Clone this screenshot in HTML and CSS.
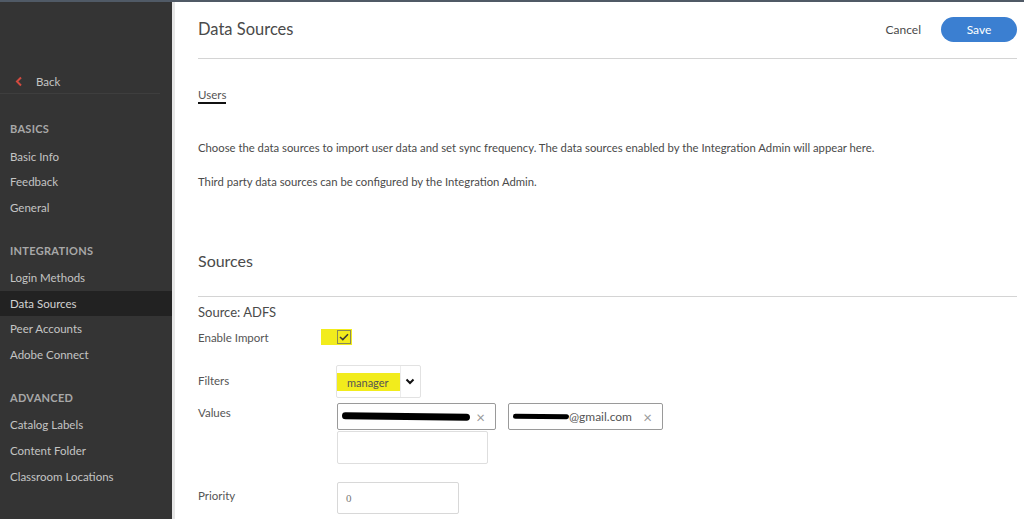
FILE: index.html
```html
<!DOCTYPE html>
<html lang="en">
<head>
    <meta charset="UTF-8">
    <meta name="viewport" content="width=device-width, initial-scale=1.0">
    <title>Data Sources</title>
    <link rel="stylesheet" href="styles.css">
</head>
<body>
    <div class="app">
        <aside class="sidebar">
            <div class="back">
                <svg class="back-icon" width="8" height="11" viewBox="0 0 8 11">
                    <path d="M6 1.5 L2 5.5 L6 9.5" fill="none" stroke="#d24a3f" stroke-width="2"/>
                </svg>
                <span>Back</span>
            </div>
            <div class="nav-group">
                <div class="nav-title">BASICS</div>
                <div class="nav-item">Basic Info</div>
                <div class="nav-item">Feedback</div>
                <div class="nav-item">General</div>
            </div>
            <div class="nav-group">
                <div class="nav-title">INTEGRATIONS</div>
                <div class="nav-item">Login Methods</div>
                <div class="nav-item active">Data Sources</div>
                <div class="nav-item">Peer Accounts</div>
                <div class="nav-item">Adobe Connect</div>
            </div>
            <div class="nav-group">
                <div class="nav-title">ADVANCED</div>
                <div class="nav-item">Catalog Labels</div>
                <div class="nav-item">Content Folder</div>
                <div class="nav-item">Classroom Locations</div>
            </div>
        </aside>

        <main class="main">
            <header class="page-header">
                <h1>Data Sources</h1>
                <div class="actions">
                    <button class="btn-cancel">Cancel</button>
                    <button class="btn-save">Save</button>
                </div>
            </header>

            <div class="tabs">
                <span class="tab active">Users</span>
            </div>

            <p class="intro">Choose the data sources to import user data and set sync frequency. The data sources enabled by the Integration Admin will appear here.</p>
            <p class="intro second">Third party data sources can be configured by the Integration Admin.</p>

            <h2 class="section-title">Sources</h2>

            <div class="source">
                <h3>Source: ADFS</h3>
                <div class="row row-import">
                    <label>Enable Import</label>
                    <div class="field">
                        <span class="highlight check-hl">
                            <span class="checkbox">
                                <svg width="10" height="8" viewBox="0 0 10 8">
                                    <path d="M1 4 L3.8 6.6 L9 1.2" fill="none" stroke="#3a3a3a" stroke-width="1.5"/>
                                </svg>
                            </span>
                        </span>
                    </div>
                </div>
                <div class="row row-filters">
                    <label>Filters</label>
                    <div class="field">
                        <div class="select">
                            <span class="select-value"><span class="highlight">manager</span></span>
                            <span class="select-arrow">
                                <svg width="10" height="7" viewBox="0 0 10 7">
                                    <path d="M1.5 1.5 L5 5 L8.5 1.5" fill="none" stroke="#111" stroke-width="2"/>
                                </svg>
                            </span>
                        </div>
                    </div>
                </div>
                <div class="row row-values">
                    <label>Values</label>
                    <div class="field values-field">
                        <div class="tags">
                            <div class="tag tag-wide">
                                <span class="scribble"></span>
                                <span class="tag-x">&times;</span>
                            </div>
                            <div class="tag">
                                <span class="scribble short"></span>
                                <span class="tag-text">@gmail.com</span>
                                <span class="tag-x">&times;</span>
                            </div>
                        </div>
                        <div class="value-input"></div>
                    </div>
                </div>
                <div class="row row-priority">
                    <label>Priority</label>
                    <div class="field">
                        <div class="text-input">0</div>
                    </div>
                </div>
            </div>
        </main>
    </div>
</body>
</html>
```

FILE: styles.css
```css
* {
    box-sizing: border-box;
}

body {
    margin: 0;
    font-family: Lato, 'Open Sans', sans-serif;
    background-color: #ffffff;
    color: #4a4a4a;
    overflow: hidden;
}

.app {
    display: flex;
    height: 519px;
    border-top: 2px solid #505a66;
}

/* sidebar */
.sidebar {
    width: 175px;
    flex-shrink: 0;
    background-color: #343434;
    color: #c8c8c8;
    border-right: 3px solid #e6e6e6;
    padding-top: 67px;
}

.back {
    display: flex;
    align-items: center;
    height: 25px;
    margin-right: 12px;
    padding-left: 15px;
    border-bottom: 1px solid #3e3e3e;
    font-size: 11.5px;
    color: #c4c4c4;
}

.back-icon {
    margin-right: 13px;
}

.nav-group {
    margin-top: 22px;
}

.nav-group + .nav-group {
    margin-top: 17px;
}

.nav-title {
    padding-left: 10px;
    height: 27.5px;
    line-height: 25px;
    font-size: 11px;
    font-weight: bold;
    letter-spacing: 0.3px;
    color: #a8a8a8;
}

.nav-item {
    padding-left: 10px;
    height: 25.7px;
    line-height: 25.7px;
    font-size: 11.5px;
    color: #c4c4c4;
}

.nav-item.active {
    background-color: #222222;
    color: #d2d2d2;
}

/* main */
.main {
    flex: 1;
    padding: 0 7px 0 23px;
}

.page-header {
    display: flex;
    justify-content: space-between;
    align-items: center;
    height: 57px;
    border-bottom: 1px solid #d4d4d4;
}

.page-header h1 {
    margin: 0;
    font-size: 16.5px;
    font-weight: normal;
    color: #4a4a4a;
    padding-bottom: 2px;
}

.actions {
    display: flex;
    align-items: center;
    padding-bottom: 2px;
}

.btn-cancel {
    border: none;
    background: none;
    font-family: inherit;
    font-size: 12px;
    color: #4a4a4a;
    margin-right: 20px;
    padding: 0;
}

.btn-save {
    width: 76px;
    height: 25px;
    border: none;
    border-radius: 13px;
    background-color: #3b7fd1;
    color: #ffffff;
    font-family: inherit;
    font-size: 12px;
}

.tabs {
    margin-top: 24px;
    height: 19px;
}

.tab {
    display: inline-block;
    font-size: 11.5px;
    line-height: 14px;
    color: #555555;
    border-bottom: 2px solid #111111;
}

.intro {
    margin: 39px 0 0;
    font-size: 11.3px;
    color: #4a4a4a;
}

.intro.second {
    margin-top: 21px;
}

.section-title {
    margin: 63px 0 0;
    height: 46px;
    font-size: 16px;
    font-weight: normal;
    color: #4a4a4a;
    border-bottom: 1px solid #d4d4d4;
}

.source h3 {
    margin: 7px 0 0;
    font-size: 13px;
    font-weight: normal;
    color: #4a4a4a;
}

.row {
    display: flex;
}

.row label {
    width: 138px;
    flex-shrink: 0;
    font-size: 11.5px;
    color: #555555;
}

.row-import {
    margin-top: 9px;
    align-items: center;
    height: 16px;
}

.highlight {
    background-color: #f2ec1c;
}

.check-hl {
    display: inline-flex;
    justify-content: flex-end;
    width: 31px;
    height: 16px;
    margin-left: -15px;
    padding: 1px;
}

.checkbox {
    display: flex;
    align-items: center;
    justify-content: center;
    width: 14px;
    height: 14px;
    border: 1px solid #8a8a55;
}

.row-filters {
    margin-top: 20px;
    align-items: center;
}

.row-filters label {
    padding-bottom: 3px;
}

.select {
    display: flex;
    width: 85px;
    height: 33px;
    border: 1px solid #e2e2e2;
    border-radius: 2px;
}

.select-value {
    flex: 1;
    display: flex;
    align-items: center;
    border-right: 1px solid #ececec;
    font-size: 11px;
    color: #555555;
}

.select-value .highlight {
    padding: 3px 11px 2px 10px;
    margin-top: 1px;
}

.select-arrow {
    width: 20px;
    display: flex;
    align-items: center;
    justify-content: center;
}

.row-values {
    margin-top: 5px;
}

.row-values label {
    padding-top: 3px;
}

.field {
    display: flex;
    flex-direction: column;
}

.values-field {
    margin-left: 1px;
}

.tags {
    display: flex;
    gap: 12px;
}

.tag {
    display: flex;
    align-items: center;
    height: 27px;
    width: 155px;
    padding: 0 10px 0 4px;
    border: 1px solid #9a9a9a;
    border-radius: 2px;
    font-size: 12px;
    color: #555555;
}

.tag-wide {
    width: 159px;
}

.scribble {
    display: inline-block;
    height: 7px;
    width: 128px;
    background-color: #000000;
    border-radius: 4px;
    transform: rotate(0.6deg);
}

.scribble.short {
    width: 56px;
    height: 5px;
}

.tag-text {
    flex: 1;
}

.tag-x {
    margin-left: auto;
    font-size: 15px;
    color: #9a9a9a;
}

.value-input {
    width: 151px;
    height: 33px;
    margin-top: 1px;
    border: 1px solid #dedede;
    border-radius: 2px;
}

.row-priority {
    margin-top: 18px;
    align-items: center;
}

.row-priority label {
    padding-bottom: 6px;
}

.text-input {
    width: 122px;
    height: 32px;
    margin-left: 1px;
    padding-left: 8px;
    line-height: 30px;
    border: 1px solid #d8d8d8;
    border-radius: 2px;
    font-family: 'Liberation Serif', serif;
    font-size: 11px;
    color: #777777;
}
```
